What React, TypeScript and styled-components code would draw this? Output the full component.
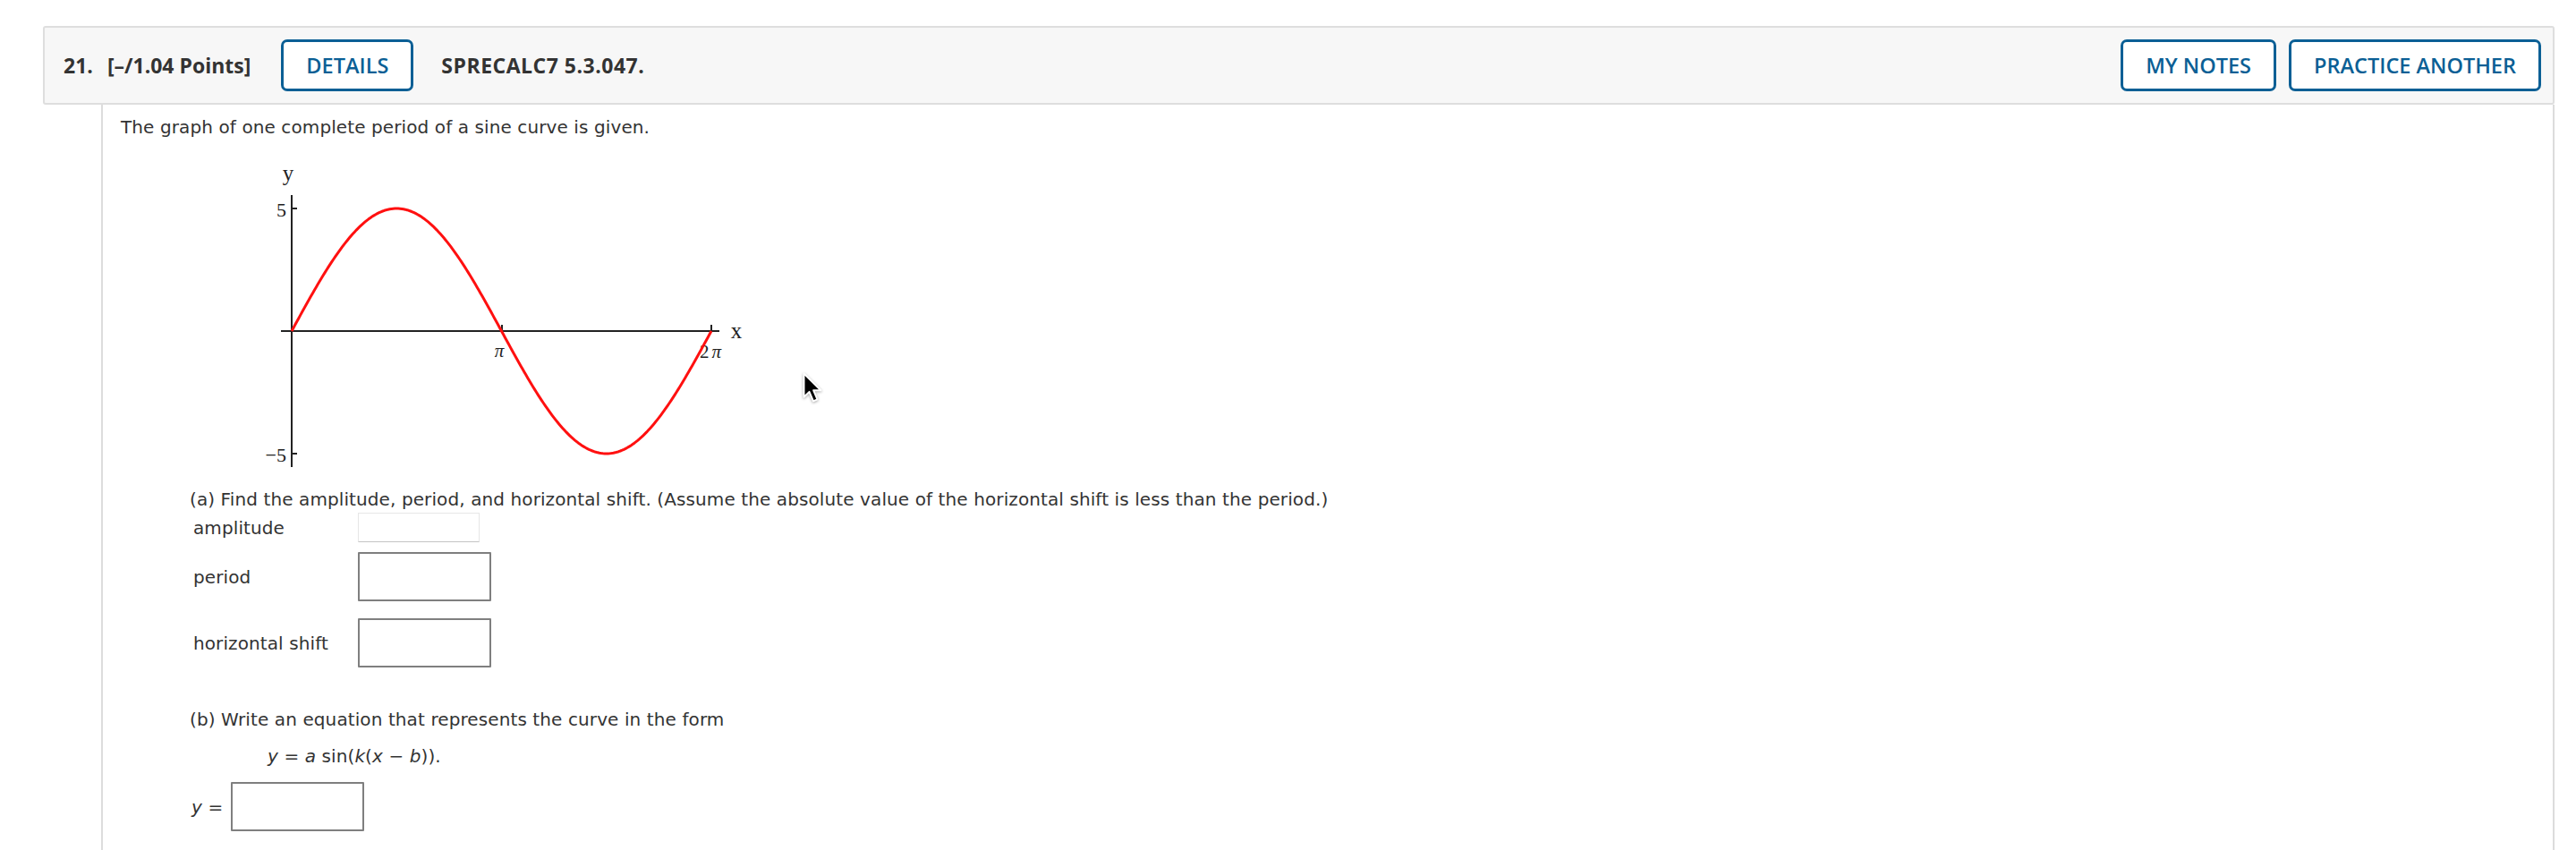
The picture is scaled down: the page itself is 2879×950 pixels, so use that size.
import React from 'react';
import styled, { createGlobalStyle } from 'styled-components';

const GlobalStyle = createGlobalStyle`
	html, body {
		margin: 0;
		padding: 0;
		background: #ffffff;
	}
	body {
		font-family: 'DejaVu Sans', Verdana, sans-serif;
		color: #333333;
	}
`;

const BLUE = '#0b5f95';

const Page = styled.div`
	position: relative;
	display: flex;
	flex-direction: column;
	height: 100vh;
	box-sizing: border-box;
	padding: 29px 24px 0 48px;
	overflow: hidden;
`;

const Header = styled.header`
	display: flex;
	align-items: center;
	flex-shrink: 0;
	height: 88px;
	box-sizing: border-box;
	padding: 0 13px 0 21px;
	background: #f7f7f7;
	border: 2px solid #dedede;
	border-radius: 3px;
	font-family: 'Open Sans', 'Liberation Sans', sans-serif;
	color: #333333;
`;

const HeadText = styled.span<{ $gap?: number; $wide?: boolean }>`
	font-size: 23px;
	font-weight: 700;
	letter-spacing: ${(p) => (p.$wide ? '0.5px' : '0')};
	margin-left: ${(p) => p.$gap ?? 0}px;
	white-space: nowrap;
`;

const Spacer = styled.div`
	flex: 1;
`;

const OutlineButton = styled.button<{ $gap?: number }>`
	height: 58px;
	box-sizing: border-box;
	padding: 0 25px;
	margin-left: ${(p) => p.$gap ?? 0}px;
	background: #ffffff;
	border: 3px solid ${BLUE};
	border-radius: 7px;
	color: ${BLUE};
	font-family: 'Open Sans', 'Liberation Sans', sans-serif;
	font-size: 23.5px;
	font-weight: 600;
	text-transform: uppercase;
	white-space: nowrap;
	cursor: pointer;
`;

const Body = styled.main`
	flex: 1;
	margin-left: 65px;
	border-left: 2px solid #dcdcdc;
	border-right: 2px solid #dcdcdc;
	padding: 11px 20px 0;
	font-size: 20px;
	letter-spacing: 0.1px;
	line-height: 28px;
`;

const Para = styled.p<{ $top?: number; $indent?: number }>`
	margin: ${(p) => p.$top ?? 0}px 0 0 ${(p) => p.$indent ?? 0}px;
	white-space: nowrap;
`;

const GraphWrap = styled.div`
	margin: 24px 0 0 145px;
	width: 560px;
	height: 350px;
`;

const Part = styled.section<{ $top: number }>`
	margin-top: ${(p) => p.$top}px;
	padding-left: 77px;
`;

const AnswerRow = styled.div<{ $top: number }>`
	display: grid;
	grid-template-columns: 188px auto;
	align-items: center;
	margin-top: ${(p) => p.$top}px;
`;

const Label = styled.span`
	padding-left: 4px;
	line-height: 22px;
`;

const AnswerBox = styled.span<{ $faint?: boolean }>`
	display: block;
	box-sizing: border-box;
	width: ${(p) => (p.$faint ? 136 : 149)}px;
	height: ${(p) => (p.$faint ? 33 : 55)}px;
	background: #ffffff;
	border: ${(p) => (p.$faint ? '1px solid #e6e6e6' : '2px solid #7f7f7f')};
	border-bottom-color: ${(p) => (p.$faint ? '#c4c4c4' : '#7f7f7f')};
	border-radius: 1px;
`;

const Equation = styled.div`
	margin: 13px 0 0 87px;
	white-space: nowrap;
`;

const Var = styled.i`
	font-style: italic;
`;

const YRow = styled.div`
	display: flex;
	align-items: center;
	gap: 9px;
	margin-top: 15px;
	padding-left: 2px;
`;

const Cursor = styled.svg`
	position: absolute;
	left: 897px;
	top: 416px;
	width: 24px;
	height: 36px;
	filter: drop-shadow(0 1px 1.5px rgba(0, 0, 0, 0.35));
`;

const AXIS = '#222222';
const GX0 = 46;
const GY0 = 190;
const PERIOD = 469;
const AMP = 137;

const sinePoints = Array.from({ length: 241 }, (_, i) => {
	const t = i / 240;
	const x = GX0 + t * PERIOD;
	const y = GY0 - AMP * Math.sin(t * Math.PI * 2);
	return `${x.toFixed(2)},${y.toFixed(2)}`;
}).join(' ');

const SineGraph: React.FC = () => (
	<svg width="560" height="350" viewBox="0 0 560 350">
		<g fontFamily="'Liberation Serif', 'Times New Roman', serif" fill="#222">
			<text x="42" y="22" fontSize="25" textAnchor="middle">y</text>
			<text x="40" y="62" fontSize="22" textAnchor="end">5</text>
			<text x="40" y="336" fontSize="22" textAnchor="end">−5</text>
			<text x="278" y="219" fontSize="21" textAnchor="middle" fontStyle="italic">π</text>
			<text x="514" y="220" fontSize="21" textAnchor="middle">2<tspan fontStyle="italic" dx="3">π</tspan></text>
			<text x="543" y="198" fontSize="25" textAnchor="middle">x</text>
		</g>
		<g stroke={AXIS} strokeWidth="2" fill="none">
			<line x1="34" y1={GY0} x2="524" y2={GY0} />
			<line x1={GX0} y1="38" x2={GX0} y2="342" />
			<line x1={GX0} y1="53" x2="52" y2="53" />
			<line x1={GX0} y1="327" x2="52" y2="327" />
			<line x1="281" y1="183" x2="281" y2={GY0} />
			<line x1="515" y1="183" x2="515" y2={GY0} />
		</g>
		<polyline points={sinePoints} fill="none" stroke="#ff1010" strokeWidth="3" strokeLinejoin="round" />
	</svg>
);

const App: React.FC = () => {
	return (
		<>
			<GlobalStyle />
			<Page>
				<Header>
					<HeadText>21.</HeadText>
					<HeadText $gap={16}>[–/1.04 Points]</HeadText>
					<OutlineButton $gap={34}>Details</OutlineButton>
					<HeadText $gap={31} $wide>SPRECALC7 5.3.047.</HeadText>
					<Spacer />
					<OutlineButton>My Notes</OutlineButton>
					<OutlineButton $gap={14}>Practice Another</OutlineButton>
				</Header>
				<Body>
					<Para>The graph of one complete period of a sine curve is given.</Para>
					<GraphWrap>
						<SineGraph />
					</GraphWrap>
					<Part $top={14}>
						<Para>(a) Find the amplitude, period, and horizontal shift. (Assume the absolute value of the horizontal shift is less than the period.)</Para>
						<AnswerRow $top={1}>
							<Label>amplitude</Label>
							<AnswerBox $faint />
						</AnswerRow>
						<AnswerRow $top={11}>
							<Label>period</Label>
							<AnswerBox />
						</AnswerRow>
						<AnswerRow $top={19}>
							<Label>horizontal shift</Label>
							<AnswerBox />
						</AnswerRow>
					</Part>
					<Part $top={44}>
						<Para>(b) Write an equation that represents the curve in the form</Para>
						<Equation>
							<Var>y</Var> = <Var>a</Var> sin(<Var>k</Var>(<Var>x</Var> − <Var>b</Var>)).
						</Equation>
						<YRow>
							<span><Var>y</Var> =</span>
							<AnswerBox />
						</YRow>
					</Part>
				</Body>
				<Cursor viewBox="0 0 16 24">
					<path d="M1 1 L1 18.5 L5 14.6 L8 21.6 L11 20.3 L8.1 13.5 L13.6 13.5 Z" fill="#000" stroke="#fff" strokeWidth="1.3" strokeLinejoin="round" />
				</Cursor>
			</Page>
		</>
	);
};

export default App;
